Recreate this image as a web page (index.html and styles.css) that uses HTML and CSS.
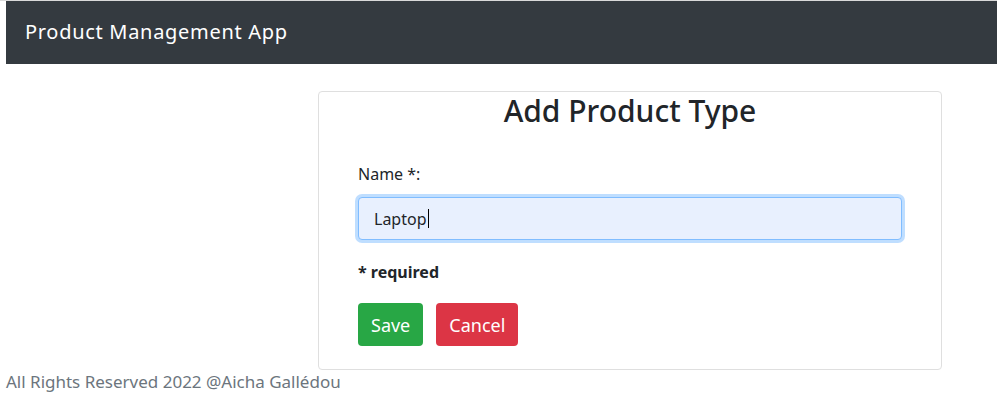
FILE: index.html
```html
<!DOCTYPE html>
<html lang="en">
<head>
<meta charset="utf-8">
<title>Product Management App</title>
<link rel="stylesheet" href="styles.css">
</head>
<body>
<div class="page">
  <nav class="navbar"><span class="brand">Product Management App</span></nav>
  <main class="main">
    <section class="card">
      <h2 class="title">Add Product Type</h2>
      <form class="form">
        <label class="label">Name *:</label>
        <div class="form-control"><span>Laptop</span><span class="caret"></span></div>
        <p class="required">* required</p>
        <div class="actions">
          <button type="button" class="btn btn-success">Save</button>
          <button type="button" class="btn btn-danger">Cancel</button>
        </div>
      </form>
    </section>
  </main>
  <footer class="footer">All Rights Reserved 2022 @Aicha Gallédou</footer>
</div>
</body>
</html>
```
FILE: styles.css
```css
* { box-sizing: border-box; }
html, body { margin: 0; padding: 0; background: #fff; }
body {
  font-family: "Noto Sans", "Open Sans", sans-serif;
  font-size: 16px;
  color: #212529;
  border-top: 1px solid #d9d9d9;
}
.page { padding-left: 6px; }
.navbar {
  height: 63px;
  background: #343a40;
  display: flex;
  align-items: center;
  padding: 0 0 2px 19px;
}
.brand { color: #fff; font-size: 20px; letter-spacing: 0.7px; }
.main { padding: 27px 55px 0 312px; }
.card {
  border: 1px solid #dfdfdf;
  border-radius: 4px;
  padding: 0 39px 23px;
}
.title {
  margin: 0;
  text-align: center;
  font-size: 30px;
  font-weight: 500;
  line-height: 38px;
}
.form { padding-top: 32px; display: flex; flex-direction: column; }
.label { display: block; line-height: 24px; margin-bottom: 11px; }
.form-control {
  height: 43px;
  display: flex;
  align-items: center;
  padding: 0 15px;
  background: #e8f0fe;
  border: 1px solid #80bdff;
  border-radius: 4px;
  box-shadow: 0 0 0 3px rgba(0,123,255,.25);
  font-size: 16px;
}
.caret { width: 1px; height: 19px; background: #000; margin-left: 1px; }
.required { margin: 20px 0 0; font-weight: 700; line-height: 24px; }
.actions { display: flex; gap: 12px; margin-top: 19px; }
.btn {
  font-family: inherit;
  font-size: 18px;
  color: #fff;
  border: none;
  border-radius: 4px;
  height: 43px;
  padding: 0 13px 0 13px;
}
.btn-success { background: #28a745; }
.btn-danger { background: #dc3545; margin-left: 1px; }
.footer { color: #6c757d; font-size: 17px; line-height: 24px; }
```
